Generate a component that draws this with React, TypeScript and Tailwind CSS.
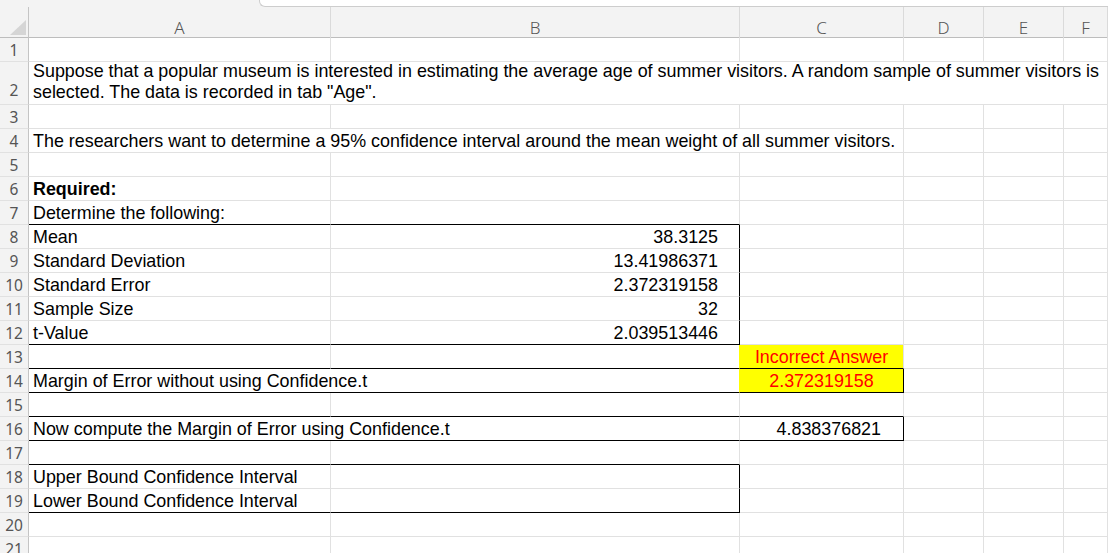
import React from "react";

type CellProps = {
  children?: React.ReactNode;
  span?: string;
  r?: string;
  b?: string;
  extra?: string;
};

const GRID = "grid grid-cols-[29px_302px_409px_164px_80px_80px_1fr]";

function Cell({ children, span = "", r = "border-r-[#e1e1e1]", b = "border-b-[#e1e1e1]", extra = "justify-start" }: CellProps) {
  return (
    <div
      className={`${span} ${r} ${b} ${extra} border-r border-b flex items-center px-[4px] whitespace-nowrap overflow-visible text-[17.9px] leading-[22px] text-black font-['Liberation_Sans',Arial,sans-serif]`}
    >
      {children}
    </div>
  );
}

function RowHead({ n, tall = false }: { n: number; tall?: boolean }) {
  return (
    <div
      className={`${tall ? "items-end pb-[3px]" : "items-center"} bg-[#f3f3f3] border-r border-b border-r-[#c4c4c4] border-b-[#e1e1e1] flex justify-center text-[15.5px] leading-[22px] text-[#555555] font-['Noto_Sans',sans-serif]`}
    >
      {n}
    </div>
  );
}

const BK_R = "border-r-black";
const BK_B = "border-b-black";
const YL_R = "border-r-[#ffff00]";

export default function App() {
  const empty = (k: number) => Array.from({ length: k }).map((_, i) => <Cell key={"e" + i} />);

  return (
    <div className="w-[1108px] h-[553px] overflow-hidden bg-white">
      {/* top strip */}
      <div className="flex h-[7px] bg-[#f3f3f3]">
        <div className="w-[259px]" />
        <div className="flex-1 bg-white border-b border-l border-[#cdcdcd] rounded-bl-[6px]" />
      </div>
      {/* column headers */}
      <div className={`${GRID} h-[31px] bg-[#f3f3f3] border-b border-b-[#bdbdbd]`}>
        <div className="relative border-r border-r-[#c4c4c4]">
          <svg className="absolute left-0 top-0" width="29" height="30" viewBox="0 0 29 30">
            <polygon points="26,13 26,28 10,28" fill="#d5d5d5" />
          </svg>
        </div>
        {["A", "B", "C", "D", "E", "F"].map((c) => (
          <div
            key={c}
            className="border-r border-r-[#dadada] flex items-center justify-center pt-[8px] text-[17px] font-light text-[#555555] font-['Noto_Sans',sans-serif]"
          >
            {c}
          </div>
        ))}
      </div>

      {/* row 1 */}
      <div className={`${GRID} h-[24px]`}>
        <RowHead n={1} />
        {empty(6)}
      </div>
      {/* row 2 */}
      <div className={`${GRID} h-[43px]`}>
        <RowHead n={2} tall />
        <Cell span="col-span-6" extra="justify-start">
          <span className="block leading-[21px] -mt-[2px]">
            Suppose that a popular museum is interested in estimating the average age of summer visitors. A random sample of summer visitors is
            <br />
            selected. The data is recorded in tab "Age".
          </span>
        </Cell>
      </div>
      {/* row 3 */}
      <div className={`${GRID} h-[24px]`}>
        <RowHead n={3} />
        {empty(6)}
      </div>
      {/* row 4 */}
      <div className={`${GRID} h-[24px]`}>
        <RowHead n={4} />
        <Cell span="col-span-3">
          The researchers want to determine a 95% confidence interval around the mean weight of all summer visitors.
        </Cell>
        {empty(3)}
      </div>
      {/* row 5 */}
      <div className={`${GRID} h-[24px]`}>
        <RowHead n={5} />
        {empty(6)}
      </div>
      {/* row 6 */}
      <div className={`${GRID} h-[24px]`}>
        <RowHead n={6} />
        <Cell>
          <span className="font-bold">Required:</span>
        </Cell>
        {empty(5)}
      </div>
      {/* row 7 */}
      <div className={`${GRID} h-[24px]`}>
        <RowHead n={7} />
        <Cell b={BK_B}>Determine the following:</Cell>
        <Cell b={BK_B} />
        {empty(4)}
      </div>
      {/* rows 8-12 */}
      {[
        [8, "Mean", "38.3125"],
        [9, "Standard Deviation", "13.41986371"],
        [10, "Standard Error", "2.372319158"],
        [11, "Sample Size", "32"],
        [12, "t-Value", "2.039513446"],
      ].map(([n, label, val]) => (
        <div key={n as number} className={`${GRID} h-[24px]`}>
          <RowHead n={n as number} />
          <Cell b={n === 12 ? BK_B : undefined}>{label}</Cell>
          <Cell r={BK_R} b={n === 12 ? BK_B : undefined} extra="justify-end pr-[21px]">
            {val}
          </Cell>
          {empty(4)}
        </div>
      ))}
      {/* row 13 */}
      <div className={`${GRID} h-[24px]`}>
        <RowHead n={13} />
        <Cell b={BK_B} />
        <Cell r={YL_R} b={BK_B} />
        <Cell b={BK_B} extra="justify-center bg-[#ffff00]">
          <span className="text-[#ff0000]">Incorrect Answer</span>
        </Cell>
        {empty(3)}
      </div>
      {/* row 14 */}
      <div className={`${GRID} h-[24px]`}>
        <RowHead n={14} />
        <Cell span="col-span-2" r={YL_R} b={BK_B}>
          Margin of Error without using Confidence.t
        </Cell>
        <Cell r={BK_R} b={BK_B} extra="justify-center bg-[#ffff00]">
          <span className="text-[#ff0000]">2.372319158</span>
        </Cell>
        {empty(3)}
      </div>
      {/* row 15 */}
      <div className={`${GRID} h-[24px]`}>
        <RowHead n={15} />
        <Cell b={BK_B} />
        <Cell b={BK_B} />
        <Cell b={BK_B} />
        {empty(3)}
      </div>
      {/* row 16 */}
      <div className={`${GRID} h-[24px]`}>
        <RowHead n={16} />
        <Cell span="col-span-2" b={BK_B}>
          Now compute the Margin of Error using Confidence.t
        </Cell>
        <Cell r={BK_R} b={BK_B} extra="justify-end pr-[22px]">
          4.838376821
        </Cell>
        {empty(3)}
      </div>
      {/* row 17 */}
      <div className={`${GRID} h-[24px]`}>
        <RowHead n={17} />
        <Cell b={BK_B} />
        <Cell b={BK_B} />
        {empty(4)}
      </div>
      {/* row 18 */}
      <div className={`${GRID} h-[24px]`}>
        <RowHead n={18} />
        <Cell>Upper Bound Confidence Interval</Cell>
        <Cell r={BK_R} />
        {empty(4)}
      </div>
      {/* row 19 */}
      <div className={`${GRID} h-[24px]`}>
        <RowHead n={19} />
        <Cell b={BK_B}>Lower Bound Confidence Interval</Cell>
        <Cell r={BK_R} b={BK_B} />
        {empty(4)}
      </div>
      {/* rows 20-21 */}
      {[20, 21].map((n) => (
        <div key={n} className={`${GRID} h-[24px]`}>
          <RowHead n={n} />
          {empty(6)}
        </div>
      ))}
    </div>
  );
}
